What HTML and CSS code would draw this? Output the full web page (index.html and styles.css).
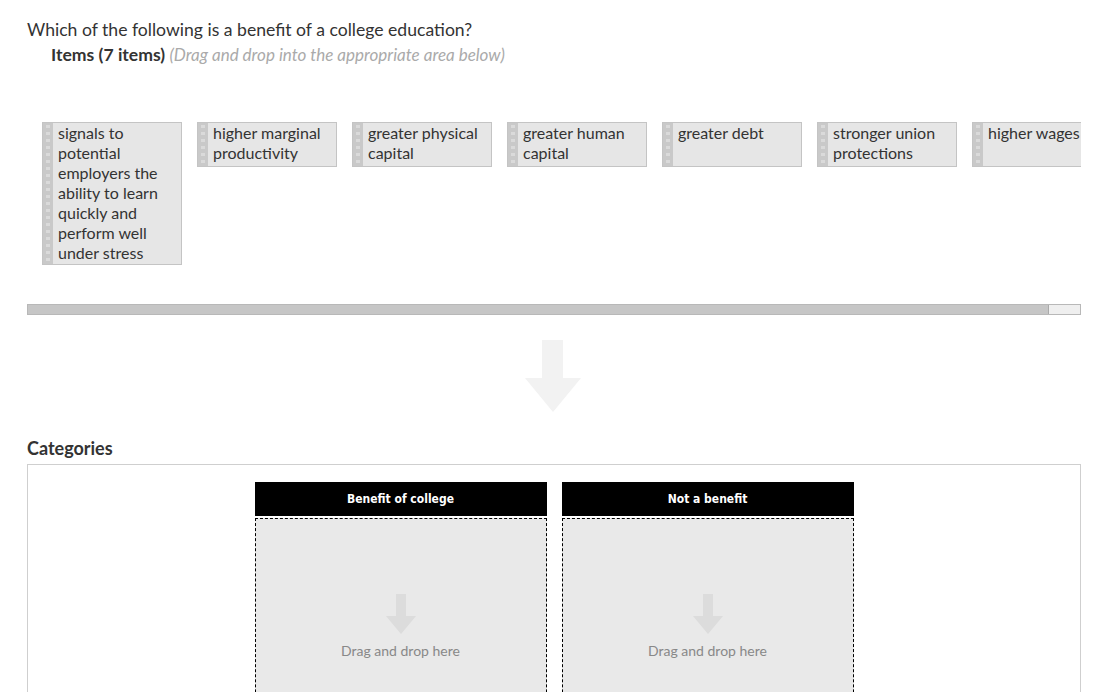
FILE: index.html
```html
<!DOCTYPE html>
<html lang="en">
<head>
    <meta charset="UTF-8">
    <meta name="viewport" content="width=device-width, initial-scale=1.0">
    <title>Drag and Drop Question</title>
    <link rel="stylesheet" href="styles.css">
</head>
<body>

<div class="question">
    <p class="prompt">Which of the following is a benefit of a college education?</p>
    <h3 class="items-title">Items (7 items) <span class="hint">(Drag and drop into the appropriate area below)</span></h3>

    <div class="items-scroll">
        <div class="items-row">
            <div class="item"><span class="grip"></span><span class="label">signals to potential employers the ability to learn quickly and perform well under stress</span></div>
            <div class="item"><span class="grip"></span><span class="label">higher marginal productivity</span></div>
            <div class="item"><span class="grip"></span><span class="label">greater physical capital</span></div>
            <div class="item"><span class="grip"></span><span class="label">greater human capital</span></div>
            <div class="item"><span class="grip"></span><span class="label">greater debt</span></div>
            <div class="item"><span class="grip"></span><span class="label">stronger union protections</span></div>
            <div class="item"><span class="grip"></span><span class="label">higher wages</span></div>
        </div>
    </div>
    <div class="scrollbar"><div class="thumb"></div></div>

    <div class="big-arrow">
        <svg width="56" height="72" viewBox="0 0 56 72"><path d="M17 0h21v38h18L28 72 0 38h17z" fill="#f2f2f2"/></svg>
    </div>

    <h3 class="categories-title">Categories</h3>
    <div class="categories">
        <div class="category">
            <div class="cat-head">Benefit of college</div>
            <div class="drop">
                <svg width="30" height="40" viewBox="0 0 30 40"><path d="M10 0h10v22h10L15 40 0 22h10z" fill="#dcdcdc"/></svg>
                <span>Drag and drop here</span>
            </div>
        </div>
        <div class="category">
            <div class="cat-head">Not a benefit</div>
            <div class="drop">
                <svg width="30" height="40" viewBox="0 0 30 40"><path d="M10 0h10v22h10L15 40 0 22h10z" fill="#dcdcdc"/></svg>
                <span>Drag and drop here</span>
            </div>
        </div>
    </div>
</div>

</body>
</html>
```

FILE: styles.css
```css
body {
    font-family: Lato, "Open Sans", sans-serif;
    margin: 0;
    padding: 0 28px 0 27px;
    color: #333;
    background-color: #fff;
    overflow: hidden;
}
.prompt {
    font-size: 17.6px;
    margin: 0;
    padding-top: 19px;
    line-height: 22px;
}
.items-title {
    font-size: 17.6px;
    font-weight: bold;
    margin: 3px 0 0 24px;
    line-height: 22px;
}
.hint {
    font-size: 17px;
    font-weight: normal;
    font-style: italic;
    color: #aaa;
}
.items-scroll {
    overflow: hidden;
    margin-top: 56px;
    padding: 0 0 0 15px;
    height: 182px;
}
.items-row {
    display: flex;
    align-items: flex-start;
    gap: 15px;
    width: max-content;
}
.item {
    display: flex;
    width: 140px;
    min-height: 45px;
    box-sizing: border-box;
    border: 1px solid #c4c4c4;
    background-color: #e6e6e6;
    font-size: 16px;
    line-height: 20px;
}
.grip {
    flex: 0 0 10px;
    align-self: stretch;
    background-color: #c9c9c9;
    background-image: repeating-linear-gradient(to bottom, #c9c9c9 0, #c9c9c9 2px, #dadada 2px, #dadada 5px, #c9c9c9 5px, #c9c9c9 7px);
    background-size: 4px 100%;
    background-position: 3px 0;
    background-repeat: no-repeat;
}
.label {
    padding: 0 2px 1px 5px;
}
.scrollbar {
    height: 11px;
    border: 1px solid #b8b8b8;
    box-sizing: border-box;
    background-color: #efefef;
}
.thumb {
    width: 97%;
    height: 100%;
    background-color: #c6c6c6;
    border-right: 1px solid #aaa;
}
.big-arrow {
    display: flex;
    justify-content: center;
    margin-top: 25px;
    padding-right: 2px;
}
.categories-title {
    font-size: 18px;
    font-weight: bold;
    margin: 25px 0 0 0;
    line-height: 22px;
}
.categories {
    margin-top: 5px;
    border: 1px solid #cfcfcf;
    padding: 17px 0 0;
    display: flex;
    justify-content: center;
    gap: 15px;
    height: 300px;
}
.category {
    width: 292px;
}
.cat-head {
    background-color: #000;
    color: #fff;
    height: 34px;
    line-height: 34px;
    text-align: center;
    font-family: "DejaVu Sans Condensed", "DejaVu Sans", sans-serif;
    font-size: 12px;
    font-weight: bold;
}
.drop {
    margin-top: 2px;
    border: 1px dashed #000;
    background-color: #e9e9e9;
    height: 250px;
    display: flex;
    flex-direction: column;
    align-items: center;
    padding-top: 75px;
    box-sizing: border-box;
}
.drop span {
    margin-top: 8px;
    font-size: 14px;
    color: #888;
}
```
